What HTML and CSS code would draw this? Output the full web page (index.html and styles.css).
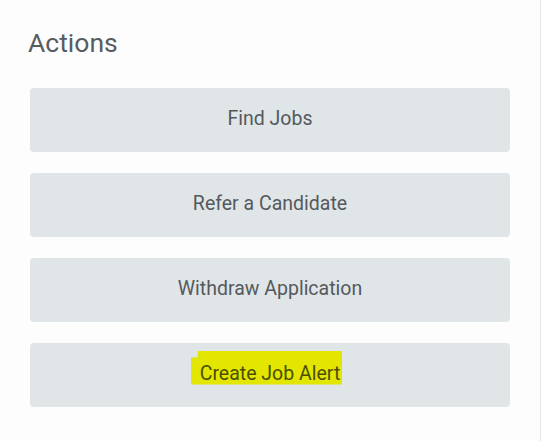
FILE: index.html
```html
<!DOCTYPE html>
<html lang="en">
<head>
    <meta charset="UTF-8">
    <meta name="viewport" content="width=device-width, initial-scale=1.0">
    <title>Actions</title>
    <link rel="stylesheet" href="styles.css">
</head>
<body>
    <div class="panel">
        <h2 class="panel-title">Actions</h2>

        <!-- Action buttons -->
        <div class="action-list">
            <button type="button" class="action-btn">Find Jobs</button>
            <button type="button" class="action-btn">Refer a Candidate</button>
            <button type="button" class="action-btn">Withdraw Application</button>
            <button type="button" class="action-btn"><mark class="marker">Create Job Alert</mark></button>
        </div>
    </div>
</body>
</html>
```

FILE: styles.css
```css
body {
    font-family: Roboto, "Liberation Sans", Arial, sans-serif;
    margin: 0;
    padding: 0;
    background-color: #ffffff;
    height: 100vh;
}

.panel {
    width: 541px;
    height: 441px;
    border-right: 1px solid #e6e6e6;
    box-sizing: border-box;
    background-color: #fdfdfd;
    padding: 27px 30px 0 30px;
}

.panel-title {
    font-size: 26.5px;
    font-weight: 400;
    color: #575c60;
    margin: 0 0 29px -2px;
    line-height: 32px;
}

.action-list {
    display: flex;
    flex-direction: column;
    gap: 21px;
    width: 480px;
}

.action-btn {
    height: 64px;
    border: none;
    border-radius: 4px;
    background-color: #e0e5e8;
    color: #55595d;
    font-family: Roboto, "Liberation Sans", Arial, sans-serif;
    font-size: 19.5px;
    cursor: pointer;
    padding: 0 0 4px 0;
}

/* hand-drawn marker stroke, with a ragged top-left corner */
.marker {
    display: inline-block;
    line-height: normal;
    background-color: #e2e600;
    color: #4d4f00;
    padding: 11px 2px 0 9px;
    margin: -11px -2px 0 -9px;
    clip-path: polygon(7px 0, 100% 0, 100% 100%, 0 100%, 0 7px, 7px 7px);
}
```
